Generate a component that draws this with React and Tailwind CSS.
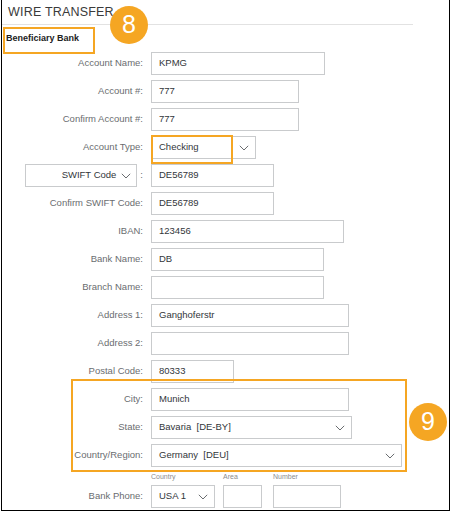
import React from 'react';

const font = { fontFamily: '"Liberation Sans", Arial, sans-serif' };

const boxClass =
  'flex h-[23px] shrink-0 items-center border border-[#c9cbcd] bg-white px-[7px] text-[9.5px] text-[#32363a]';

function Chevron() {
  return (
    <svg width="10" height="6" viewBox="0 0 10 6" className="shrink-0">
      <path d="M0.8 0.8 L5 5 L9.2 0.8" fill="none" stroke="#6a6d70" strokeWidth="1" />
    </svg>
  );
}

function Field({ label, value, width }) {
  return (
    <div className="flex h-[23px] items-center">
      <span className="w-[141px] shrink-0 text-right text-[9.5px] text-[#6a6d70]">{label}</span>
      <div className={`${boxClass} ml-[8px]`} style={{ width }}>
        {value}
      </div>
    </div>
  );
}

function SelectField({ label, value, width }) {
  return (
    <div className="flex h-[23px] items-center">
      <span className="w-[141px] shrink-0 text-right text-[9.5px] text-[#6a6d70]">{label}</span>
      <div className={`${boxClass} ml-[8px] justify-between pr-[6px]`} style={{ width }}>
        <span className="whitespace-pre">{value}</span>
        <Chevron />
      </div>
    </div>
  );
}

export default function App() {
  return (
    <div className="relative h-[516px] w-[451px] bg-white" style={font}>
      <div className="ml-px h-[511px] w-[449px] border-x border-b border-black">
        <div className="h-[25px] w-[411px] border-b border-[#e2e2e2] pl-[6px] pt-[5px] text-[12.5px] leading-[14px] tracking-[0.2px] text-[#3a3a3a]">
          WIRE TRANSFER
        </div>
        <div className="flex h-[27px] items-center pl-[4px] text-[9px] font-bold text-[#222]">
          Beneficiary Bank
        </div>

        <div className="flex flex-col gap-[5px]">
          <Field label="Account Name:" value="KPMG" width={174} />
          <Field label="Account #:" value="777" width={148} />
          <Field label="Confirm Account #:" value="777" width={148} />
          <SelectField label="Account Type:" value="Checking" width={105} />

          <div className="flex h-[23px] items-center">
            <div className="flex w-[141px] shrink-0 items-center justify-end">
              <div className="flex h-[23px] w-[112px] items-center justify-end gap-[5px] border border-[#c9cbcd] pr-[5px] text-[9.5px] text-[#32363a]">
                <span>SWIFT Code</span>
                <Chevron />
              </div>
              <span className="ml-[3px] text-[9.5px] text-[#6a6d70]">:</span>
            </div>
            <div className={`${boxClass} ml-[8px] w-[123px]`}>DE56789</div>
          </div>

          <Field label="Confirm SWIFT Code:" value="DE56789" width={123} />
          <Field label="IBAN:" value="123456" width={193} />
          <Field label="Bank Name:" value="DB" width={173} />
          <Field label="Branch Name:" value="" width={173} />
          <Field label="Address 1:" value="Ganghoferstr" width={198} />
          <Field label="Address 2:" value="" width={198} />
          <Field label="Postal Code:" value="80333" width={83} />
          <Field label="City:" value="Munich" width={198} />
          <SelectField label="State:" value="Bavaria  [DE-BY]" width={201} />
          <SelectField label="Country/Region:" value="Germany  [DEU]" width={251} />
        </div>

        <div className="mt-[4px] flex h-[13px] items-center text-[7px] text-[#8a8c8e]">
          <span className="ml-[149px] w-[72px]">Country</span>
          <span className="w-[50px]">Area</span>
          <span>Number</span>
        </div>
        <div className="mt-[1px] flex h-[23px] items-center">
          <span className="w-[141px] shrink-0 text-right text-[9.5px] text-[#6a6d70]">Bank Phone:</span>
          <div className={`${boxClass} ml-[8px] w-[64px] justify-between pr-[6px]`}>
            <span>USA 1</span>
            <Chevron />
          </div>
          <div className={`${boxClass} ml-[8px] w-[39px]`} />
          <div className={`${boxClass} ml-[11px] w-[68px]`} />
        </div>
      </div>

      {/* annotations */}
      <div className="absolute left-[3px] top-[27px] h-[27px] w-[92px] border-2 border-[#f5a623]" />
      <div className="absolute left-[151px] top-[135px] h-[29px] w-[82px] border-2 border-[#f5a623]" />
      <div className="absolute left-[71px] top-[379px] h-[93px] w-[336px] border-2 border-[#f5a623]" />
      <div className="absolute left-[110px] top-[6px] flex h-[38px] w-[38px] items-center justify-center rounded-full bg-[#f5a623] text-[25px] text-white">
        8
      </div>
      <div className="absolute left-[409px] top-[403px] flex h-[38px] w-[38px] items-center justify-center rounded-full bg-[#f5a623] text-[25px] text-white">
        9
      </div>
    </div>
  );
}
